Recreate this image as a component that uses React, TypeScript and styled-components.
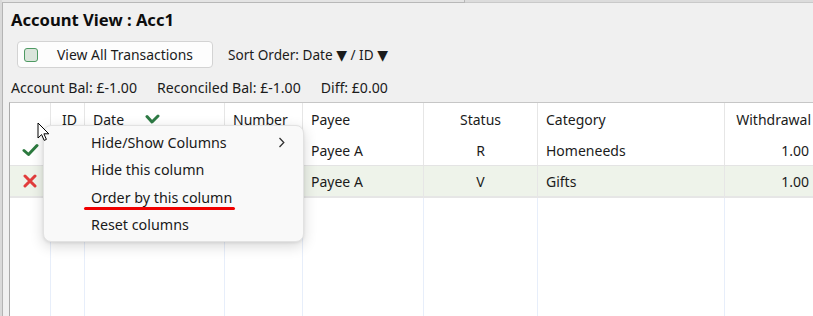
import React from "react";
import styled, { createGlobalStyle } from "styled-components";

const GlobalStyle = createGlobalStyle`
  html, body { margin: 0; padding: 0; }
  body {
    width: 813px;
    height: 316px;
    overflow: hidden;
    background: #f0f0f0;
    font-family: "Noto Sans", "Open Sans", sans-serif;
    color: #1b1b1b;
  }
`;

const Window = styled.div`
  position: relative;
  width: 813px;
  height: 316px;
  display: flex;
  flex-direction: column;
  border-left: 2px solid #d9d9d9;
  box-sizing: border-box;
`;

const TopStrip = styled.div`
  display: flex;
  height: 3px;
  flex: none;
`;

const TopTab = styled.div<{ $w?: number; $active?: boolean }>`
  width: ${(p) => (p.$w ? `${p.$w}px` : "auto")};
  flex: ${(p) => (p.$w ? "none" : "1")};
  background: ${(p) => (p.$active ? "#e4e4e4" : "#dcdcdc")};
  border-bottom: 1px solid ${(p) => (p.$active ? "#b8b8b8" : "#c9c9c9")};
  border-right: ${(p) => (p.$active ? "1px solid #b8b8b8" : "none")};
  box-sizing: border-box;
`;

const Content = styled.div`
  flex: 1;
  display: flex;
  flex-direction: column;
  border-left: 1px solid #b4b4b4;
  padding-left: 6px;
  min-height: 0;
`;

const Title = styled.div`
  margin-top: 6px;
  padding-left: 2px;
  height: 21px;
  line-height: 21px;
  font-size: 16.6px;
  font-weight: 700;
  color: #0d0d0d;
`;

const Toolbar = styled.div`
  margin-top: 11px;
  padding-left: 8px;
  display: flex;
  align-items: center;
  gap: 15px;
  height: 27px;
`;

const ToggleButton = styled.div`
  width: 196px;
  height: 27px;
  box-sizing: border-box;
  display: flex;
  align-items: center;
  gap: 19px;
  padding-left: 6px;
  background: #fdfdfd;
  border: 1px solid #d3d3d3;
  border-radius: 4px;
  font-size: 13.9px;
`;

const CheckBox = styled.span`
  width: 14px;
  height: 14px;
  box-sizing: border-box;
  border: 1.6px solid #4e9a63;
  border-radius: 3px;
  background: #dae5db;
`;

const SortLabel = styled.span`
  font-size: 13.6px;
  white-space: pre;
`;

const Tri = styled.span`
  font-family: "DejaVu Sans", sans-serif;
  font-size: 14px;
  line-height: 1;
`;

const Balances = styled.div`
  margin-top: 11px;
  padding-left: 2px;
  display: flex;
  gap: 20px;
  height: 18px;
  line-height: 18px;
  font-size: 14.1px;
`;

const Table = styled.div`
  margin-top: 5px;
  flex: 1;
  display: flex;
  flex-direction: column;
  background: #fff;
  border-top: 1px solid #c6c6c6;
  border-left: 1px solid #a9a9a9;
  min-height: 0;
`;

const COLS = "41px 34px 140px 78px 121px 114px 187px 90px";

const Row = styled.div<{ $h: number; $bg?: string; $line?: string; $lw?: number }>`
  display: grid;
  grid-template-columns: ${COLS};
  height: ${(p) => p.$h}px;
  background: ${(p) => p.$bg || "#fff"};
  border-bottom: ${(p) => (p.$line ? `${p.$lw || 1}px solid ${p.$line}` : "none")};
  flex: none;
  font-size: 14px;
`;

const FillerRow = styled.div`
  display: grid;
  grid-template-columns: ${COLS};
  flex: 1;
`;

const Cell = styled.div<{ $align?: "left" | "center" | "right"; $divider?: string; $pr?: number }>`
  display: flex;
  align-items: center;
  justify-content: ${(p) =>
    p.$align === "right" ? "flex-end" : p.$align === "center" ? "center" : "flex-start"};
  padding-left: ${(p) => (p.$align === "left" || !p.$align ? 8 : 0)}px;
  padding-right: ${(p) => p.$pr ?? 0}px;
  border-right: 1px solid ${(p) => p.$divider || "#e6e6e6"};
  white-space: nowrap;
  overflow: hidden;
  box-sizing: border-box;
`;

const HeaderCellGap = styled.span`
  display: inline-flex;
  margin-left: 21px;
`;

const Menu = styled.div`
  position: absolute;
  left: 41px;
  top: 125px;
  width: 261px;
  box-sizing: border-box;
  padding: 3px 0 3px;
  background: #f9f9f9;
  border: 1px solid #e2e2e2;
  border-radius: 8px;
  box-shadow: 0 4px 14px rgba(0, 0, 0, 0.16), 0 1px 3px rgba(0, 0, 0, 0.08);
`;

const MenuItem = styled.div`
  position: relative;
  height: 27.3px;
  display: flex;
  align-items: center;
  padding-left: 47px;
  padding-right: 18px;
  font-size: 14.3px;
  color: #1a1a1a;
`;

const MenuLabel = styled.span`
  flex: 1;
`;

const Underline = styled.div`
  position: absolute;
  left: 40px;
  top: 23px;
  width: 151px;
  height: 3px;
  border-radius: 2px;
  background: #f00000;
`;

const Cursor = styled.svg`
  position: absolute;
  left: 35px;
  top: 122px;
`;

const Check = () => (
  <svg width="17" height="14" viewBox="0 0 17 14">
    <path d="M2 7.5 L6.5 11.5 L15 2.5" fill="none" stroke="#2c7a3f" strokeWidth="3" strokeLinecap="round" strokeLinejoin="round" />
  </svg>
);

const Cross = () => (
  <svg width="14" height="14" viewBox="0 0 14 14">
    <path d="M2 2 L12 12 M12 2 L2 12" fill="none" stroke="#e23c3c" strokeWidth="3" strokeLinecap="round" />
  </svg>
);

const SortChevron = () => (
  <svg width="15" height="11" viewBox="0 0 15 11">
    <path d="M2 2.5 L7 8 L13 2" fill="none" stroke="#2d7a44" strokeWidth="3" strokeLinecap="round" strokeLinejoin="round" />
  </svg>
);

const Chevron = () => (
  <svg width="7" height="11" viewBox="0 0 7 11">
    <path d="M1.5 1 L5.8 5.5 L1.5 10" fill="none" stroke="#333" strokeWidth="1.3" />
  </svg>
);

const rows = [
  { icon: <Check />, payee: "Payee A", status: "R", category: "Homeneeds", amount: "1.00", bg: "#ffffff", line: "#e4e4e4", lw: 1, h: 30 },
  { icon: <Cross />, payee: "Payee A", status: "V", category: "Gifts", amount: "1.00", bg: "#eef3ea", line: "#e6e6e6", lw: 2, h: 30 },
];

const menuItems = ["Hide/Show Columns", "Hide this column", "Order by this column", "Reset columns"];

export default function App() {
  return (
    <>
      <GlobalStyle />
      <Window>
        <TopStrip>
          <TopTab $w={463} $active />
          <TopTab />
        </TopStrip>
        <Content>
          <Title>Account View : Acc1</Title>
          <Toolbar>
            <ToggleButton>
              <CheckBox />
              <span>View All Transactions</span>
            </ToggleButton>
            <SortLabel>
              {"Sort Order: Date "}
              <Tri>▼</Tri>
              {" / ID "}
              <Tri>▼</Tri>
            </SortLabel>
          </Toolbar>
          <Balances>
            <span>Account Bal: £-1.00</span>
            <span>Reconciled Bal: £-1.00</span>
            <span>Diff: £0.00</span>
          </Balances>
          <Table>
            <Row $h={32}>
              <Cell />
              <Cell $align="right" $pr={7}>ID</Cell>
              <Cell>
                Date
                <HeaderCellGap>
                  <SortChevron />
                </HeaderCellGap>
              </Cell>
              <Cell>Number</Cell>
              <Cell>Payee</Cell>
              <Cell $align="center">Status</Cell>
              <Cell>Category</Cell>
              <Cell $align="right" $pr={3}>Withdrawal</Cell>
            </Row>
            {rows.map((r, i) => (
              <Row key={i} $h={r.h} $bg={r.bg} $line={r.line} $lw={r.lw}>
                <Cell $align="center">{r.icon}</Cell>
                <Cell />
                <Cell />
                <Cell />
                <Cell>{r.payee}</Cell>
                <Cell $align="center">{r.status}</Cell>
                <Cell>{r.category}</Cell>
                <Cell $align="right" $pr={5}>{r.amount}</Cell>
              </Row>
            ))}
            <FillerRow>
              {Array.from({ length: 8 }).map((_, i) => (
                <Cell key={i} $divider="#e7eefa" />
              ))}
            </FillerRow>
          </Table>
        </Content>
        <Menu>
          {menuItems.map((m, i) => (
            <MenuItem key={m}>
              <MenuLabel>{m}</MenuLabel>
              {i === 0 && <Chevron />}
              {i === 2 && <Underline />}
            </MenuItem>
          ))}
        </Menu>
        <Cursor width="13" height="20" viewBox="0 0 13 20">
          <path d="M1 1 L1 16 L4.6 12.6 L7.2 18.4 L9.4 17.4 L6.9 11.8 L11.8 11.8 Z" fill="#fff" stroke="#000" strokeWidth="1" strokeLinejoin="round" />
        </Cursor>
      </Window>
    </>
  );
}
